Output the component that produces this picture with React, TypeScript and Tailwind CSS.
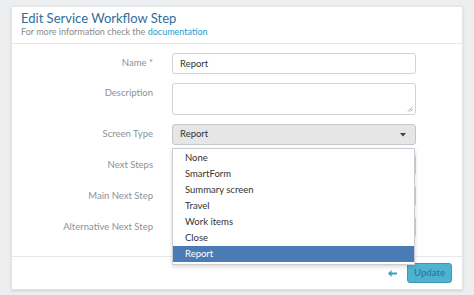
import React from "react";

const options = ["None", "SmartForm", "Summary screen", "Travel", "Work items", "Close", "Report"];

function Field({ label, children, top }: { label: string; children: React.ReactNode; top?: boolean }) {
  return (
    <div className={`flex ${top ? "items-start" : "items-center"}`}>
      <div className={`w-[141px] text-right text-[9.5px] text-[#8a9199] ${top ? "pt-[3px]" : ""}`}>{label}</div>
      <div className="ml-[19px] w-[244px]">{children}</div>
    </div>
  );
}

function Input({ value, tall }: { value?: string; tall?: boolean }) {
  return (
    <div
      className={`${tall ? "h-[22px]" : "h-[21px]"} rounded-[3px] border border-[#cfd3d7] bg-white px-[7px] text-[9.5px] leading-[19px] text-[#333]`}
    >
      {value}
    </div>
  );
}

export default function App() {
  return (
    <div
      className="h-[295px] w-[474px] overflow-hidden bg-[#eceef0] pl-[11px] pt-[6px]"
      style={{ fontFamily: "Lato, 'Open Sans', sans-serif" }}
    >
      <div className="relative h-[284px] w-[452px] border border-[#e3e5e7] bg-white shadow-sm">
        <div className="h-[37px] border-b border-[#e6e8ea] px-[9px] pt-[4px]">
          <div className="text-[13px] leading-[15px] text-[#2e6e9e]">Edit Service Workflow Step</div>
          <div className="text-[9px] leading-[12px] text-[#868b90]">
            For more information check the <span className="text-[#2a9bc9]">documentation</span>
          </div>
        </div>

        <div className="flex h-[212px] flex-col gap-[9px] pt-[9px]">
          <Field label="Name *">
            <Input value="Report" />
          </Field>
          <Field label="Description" top>
            <div className="relative h-[32px] rounded-[3px] border border-[#cfd3d7] bg-white">
              <svg className="absolute bottom-[2px] right-[2px]" width="6" height="6" viewBox="0 0 6 6">
                <path d="M1 5.5 L5.5 1 M3.5 5.5 L5.5 3.5" stroke="#888" strokeWidth="0.8" />
              </svg>
            </div>
          </Field>
          <Field label="Screen Type">
            <div className="flex h-[21px] items-center justify-between rounded-[3px] border border-[#c4c7ca] bg-[#e6e6e6] px-[7px] text-[9.5px] text-[#333]">
              <span>Report</span>
              <svg width="6" height="4" viewBox="0 0 6 4" className="mr-[2px]">
                <path d="M0 0 L6 0 L3 3.5 Z" fill="#444" />
              </svg>
            </div>
          </Field>
          <Field label="Next Steps">
            <Input tall />
          </Field>
          <Field label="Main Next Step">
            <Input tall />
          </Field>
          <Field label="Alternative Next Step">
            <Input tall />
          </Field>
        </div>

        <div className="flex h-[33px] items-center justify-end border-t border-[#e6e8ea] pr-[10px]">
          <svg width="9" height="7" viewBox="0 0 9 7" className="mr-[10px]">
            <path d="M0 3.5 L3.5 0 L3.5 2.5 L9 2.5 L9 4.5 L3.5 4.5 L3.5 7 Z" fill="#3a9cc8" />
          </svg>
          <button className="h-[20px] w-[45px] rounded-[3px] border border-[#3a9ab5] bg-[#4fb3cf] text-[9.5px] font-bold text-[#2d7fb0]">
            Update
          </button>
        </div>

        <div className="absolute left-[160px] top-[141px] w-[243px] border border-[#c9ccd0] bg-white pb-[2px] pt-[1px] shadow-[0_2px_4px_rgba(0,0,0,0.15)]">
          {options.map((o) => (
            <div
              key={o}
              className={`h-[16px] pl-[12px] text-[9.5px] leading-[16px] ${o === "Report" ? "bg-[#4a7bb5] text-white" : "text-[#333]"}`}
            >
              {o}
            </div>
          ))}
        </div>
      </div>
    </div>
  );
}
